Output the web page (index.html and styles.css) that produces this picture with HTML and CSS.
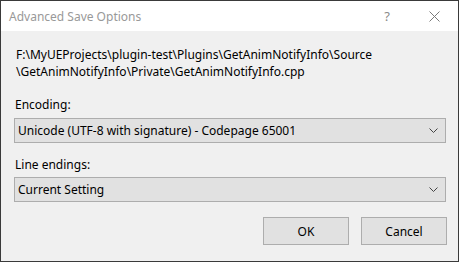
FILE: index.html
```html
<!DOCTYPE html>
<html lang="en">
<head>
    <meta charset="UTF-8">
    <title>Advanced Save Options</title>
    <link rel="stylesheet" href="styles.css">
</head>
<body>
    <div class="window">
        <div class="title-bar">
            <span class="title">Advanced Save Options</span>
            <span class="help">?</span>
            <svg class="close" width="11" height="11" viewBox="0 0 11 11"><path d="M0.5 0.5L10.5 10.5M10.5 0.5L0.5 10.5" stroke="#7a7a7a" stroke-width="1" fill="none"/></svg>
        </div>
        <div class="content">
            <div class="path">F:\MyUEProjects\plugin-test\Plugins\GetAnimNotifyInfo\Source<br>\GetAnimNotifyInfo\Private\GetAnimNotifyInfo.cpp</div>
            <div class="field">
                <label class="label">Encoding:</label>
                <div class="select">
                    <span>Unicode (UTF-8 with signature) - Codepage 65001</span>
                    <svg class="chev" width="9" height="5" viewBox="0 0 9 5"><path d="M0.5 0.5L4.5 4.5L8.5 0.5" stroke="#444" fill="none"/></svg>
                </div>
            </div>
            <div class="field">
                <label class="label">Line endings:</label>
                <div class="select">
                    <span>Current Setting</span>
                    <svg class="chev" width="9" height="5" viewBox="0 0 9 5"><path d="M0.5 0.5L4.5 4.5L8.5 0.5" stroke="#444" fill="none"/></svg>
                </div>
            </div>
            <div class="buttons">
                <button class="btn">OK</button>
                <button class="btn">Cancel</button>
            </div>
        </div>
    </div>
</body>
</html>
```
FILE: styles.css
```css
*{
    margin: 0;
    padding: 0;
    box-sizing: border-box;
}
body{
    font-family: "Noto Sans", "DejaVu Sans", sans-serif;
    font-size: 12px;
    color: #000;
}
.window{
    width: 459px;
    height: 262px;
    border: 1px solid #3a3a3a;
    background: #f0f0f0;
    display: flex;
    flex-direction: column;
}
.title-bar{
    height: 30px;
    background: #fff;
    display: flex;
    align-items: center;
    padding-left: 8px;
}
.title{
    flex: 1;
    color: #999;
    font-size: 12px;
}
.help{
    color: #8a8a8a;
    font-size: 13px;
    margin-right: 39px;
}
.close{
    margin-right: 18px;
}
.content{
    padding: 0 13px;
    display: flex;
    flex-direction: column;
}
.path{
    margin-top: 15px;
    padding-left: 2px;
    line-height: 17px;
}
.field{
    display: flex;
    flex-direction: column;
}
.label{
    line-height: 17px;
    padding-left: 1px;
    margin-top: 16px;
    margin-bottom: 5px;
}
.field + .field .label{
    margin-top: 13px;
    margin-bottom: 4px;
}
.select{
    width: 432px;
    height: 25px;
    border: 1px solid #adadad;
    background: #e1e1e1;
    display: flex;
    align-items: center;
    padding: 0 3px;
}
.select span{
    flex: 1;
}
.chev{
    margin-right: 4px;
}
.buttons{
    display: flex;
    justify-content: flex-end;
    gap: 12px;
    margin-top: 15px;
}
.btn{
    width: 86px;
    height: 28px;
    border: 1px solid #adadad;
    background: #e1e1e1;
    font-family: inherit;
    font-size: 12px;
    color: #000;
}
.btn:last-child{
    margin-right: -2px;
}
```
